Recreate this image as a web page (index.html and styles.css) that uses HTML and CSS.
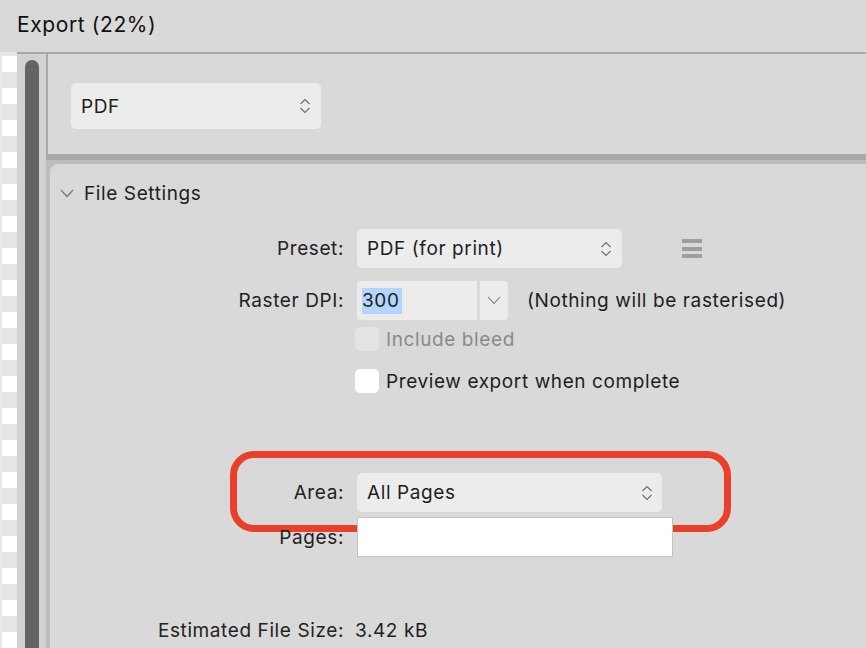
FILE: index.html
```html
<!DOCTYPE html>
<html>
<head>
<meta charset="utf-8">
<link rel="stylesheet" href="styles.css">
</head>
<body>
<div class="titlebar">Export (22%)</div>
<div class="main">
  <div class="checker"></div>
  <div class="workspace">
    <div class="gutter"><div class="scrollbar"></div></div>
    <div class="panels">
      <div class="top-panel">
        <div class="select format">
          <span>PDF</span>
          <svg class="updown" width="12" height="16" viewBox="0 0 12 16"><path d="M1.5 6 L6 1.5 L10.5 6 M1.5 10 L6 14.5 L10.5 10" fill="none" stroke="#6e6e6e" stroke-width="1.1"/></svg>
        </div>
      </div>
      <div class="settings">
        <div class="section-head">
          <svg class="chev" width="14" height="9" viewBox="0 0 14 9"><path d="M1 1 L7 7.5 L13 1" fill="none" stroke="#777" stroke-width="1.2"/></svg>
          <span>File Settings</span>
        </div>
        <div class="form">
          <div class="row r-preset">
            <div class="label">Preset:</div>
            <div class="select preset">
              <span>PDF (for print)</span>
              <svg class="updown" width="12" height="16" viewBox="0 0 12 16"><path d="M1.5 6 L6 1.5 L10.5 6 M1.5 10 L6 14.5 L10.5 10" fill="none" stroke="#6e6e6e" stroke-width="1.1"/></svg>
            </div>
            <div class="hamburger"><i></i><i></i><i></i></div>
          </div>
          <div class="row r-dpi">
            <div class="label">Raster DPI:</div>
            <div class="dpi-field"><span class="sel">300</span></div>
            <div class="dpi-btn"><svg width="14" height="9" viewBox="0 0 14 9"><path d="M1 1 L7 7.5 L13 1" fill="none" stroke="#777" stroke-width="1.1"/></svg></div>
            <div class="note">(Nothing will be rasterised)</div>
          </div>
          <div class="row r-bleed">
            <div class="label"></div>
            <div class="check disabled"></div>
            <div class="check-text dim">Include bleed</div>
          </div>
          <div class="row r-preview">
            <div class="label"></div>
            <div class="check"></div>
            <div class="check-text">Preview export when complete</div>
          </div>
          <div class="row r-area">
            <div class="label">Area:</div>
            <div class="select area">
              <span>All Pages</span>
              <svg class="updown" width="12" height="16" viewBox="0 0 12 16"><path d="M1.5 6 L6 1.5 L10.5 6 M1.5 10 L6 14.5 L10.5 10" fill="none" stroke="#6e6e6e" stroke-width="1.1"/></svg>
            </div>
            <div class="highlight"></div>
          </div>
          <div class="row r-pages">
            <div class="label">Pages:</div>
            <div class="pages-input"></div>
          </div>
          <div class="row r-size">
            <div class="label">Estimated File Size:</div>
            <div class="size-val">3.42 kB</div>
          </div>
        </div>
      </div>
    </div>
  </div>
</div>
</body>
</html>
```
FILE: styles.css
```css
* { box-sizing: border-box; }
html, body { margin: 0; padding: 0; }
body {
  width: 866px;
  height: 648px;
  overflow: hidden;
  background: #d9d9d9;
  font-family: Inter, "Noto Sans", "Liberation Sans", sans-serif;
  color: #1e1e1e;
  font-size: 19px;
  letter-spacing: 0.6px;
}
.titlebar {
  height: 52px;
  padding-left: 17px;
  font-size: 21px;
  line-height: 50px;
  color: #111;
  background: #d9d9d9;
}
.main {
  display: flex;
  height: 596px;
}
.checker {
  width: 17px;
  border-left: 2px solid #e9e9e9;
  background: repeating-linear-gradient(to bottom, #ffffff 0 16px, #e6e6e6 16px 32px);
  background-position: 0 4px;
}
.workspace {
  flex: 1;
  display: flex;
  border-top: 2px solid #a9a9a9;
}
.gutter {
  width: 29px;
  background: #d2d2d2;
  padding: 6px 0 0 8px;
}
.scrollbar {
  width: 14px;
  height: 100%;
  background: #656565;
  border-radius: 7px 7px 0 0;
}
.panels {
  flex: 1;
  display: flex;
  flex-direction: column;
  background: #bdbdbd;
}
.top-panel {
  height: 106px;
  background: #d9d9d9;
  border-left: 2px solid #a9a9a9;
  border-bottom: 6px solid #a9a9a9;
  padding: 29px 0 0 23px;
}
.select {
  background: #ececec;
  border-radius: 5px;
  display: flex;
  align-items: center;
  justify-content: space-between;
  padding: 0 10px 0 10px;
}
.format { width: 250px; height: 46px; }
.updown { flex: none; }
.settings {
  flex: 1;
  margin-top: 4px;
  margin-left: 4px;
  background: #d9d9d9;
  border-radius: 8px 0 0 0;
  position: relative;
}
.section-head {
  display: flex;
  align-items: center;
  height: 56px;
  padding-left: 10px;
  padding-top: 2px;
}
.section-head .chev { margin-right: 10px; margin-top: 1px; }
.form {
  padding-top: 9px;
}
.row {
  display: flex;
  align-items: center;
  position: relative;
}
.label {
  width: 294px;
  text-align: right;
  flex: none;
  margin-right: 13px;
  color: #222;
}
.preset { width: 265px; height: 39px; }
.hamburger {
  margin-left: 60px;
  width: 20px;
  display: flex;
  flex-direction: column;
  gap: 3.5px;
}
.hamburger i { display: block; height: 4px; background: #9e9e9e; }
.r-dpi { margin-top: 13px; }
.dpi-field {
  width: 120px;
  height: 39px;
  background: #ececec;
  border-radius: 4px 0 0 4px;
  display: flex;
  align-items: center;
  padding-left: 5px;
}
.sel { background: #b4d5fe; padding: 1px 0 2px 0; line-height: 23px; width: 40px; }
.dpi-btn {
  width: 28px;
  height: 39px;
  margin-left: 3px;
  background: #ececec;
  border-radius: 0 4px 4px 0;
  display: flex;
  align-items: center;
  justify-content: center;
}
.note { margin-left: 19px; }
.check {
  width: 24px;
  height: 24px;
  border-radius: 5px;
  background: #fff;
  margin-left: -2px;
}
.check.disabled { background: #e3e3e3; }
.check-text { margin-left: 7px; }
.dim { color: #8a8a8a; }
.r-bleed { margin-top: 7px; }
.r-preview { margin-top: 18px; }
.r-area { margin-top: 80px; }
.area { width: 305px; height: 39px; padding-right: 9px; }
.highlight {
  position: absolute;
  left: 180px;
  top: -22px;
  width: 501px;
  height: 81px;
  border: 7px solid #ea3f2a;
  border-radius: 24px;
}
.r-pages { margin-top: 5px; }
.pages-input {
  width: 316px;
  height: 40px;
  background: #fff;
  border: 1px solid #c2c2c2;
}
.r-size { margin-top: 62px; }
.size-val { margin-left: -2px; }
```
